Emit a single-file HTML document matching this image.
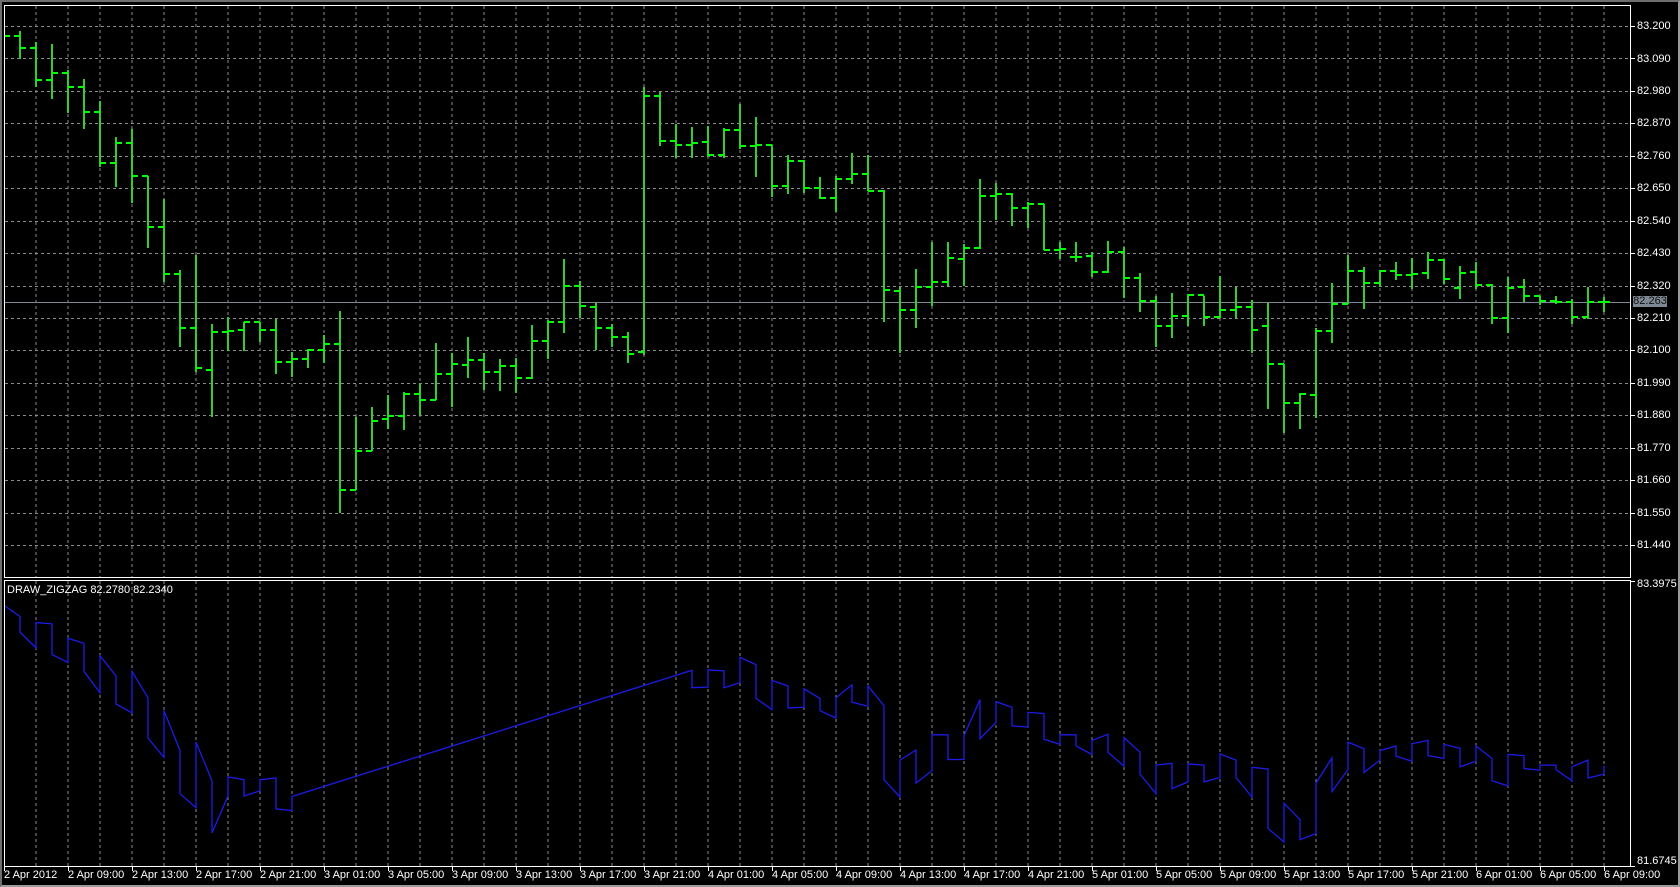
<!DOCTYPE html>
<html><head><meta charset="utf-8">
<style>
html,body{margin:0;padding:0;background:#000;}
body{width:1680px;height:887px;position:relative;overflow:hidden;font-family:"Liberation Sans",Tahoma,sans-serif;}
.outer{position:absolute;left:0;top:0;width:1676px;height:883px;border:2px solid #6e6e6e;border-right-color:#9a9a9a;border-bottom-color:#9a9a9a;}
svg{position:absolute;left:0;top:0;}
.pl{position:absolute;left:1637px;color:#fff;font-size:11px;line-height:12px;}
.tl{position:absolute;top:869px;color:#fff;font-size:11px;line-height:12px;white-space:nowrap;}
</style></head><body>
<div class="outer"></div>
<svg id="s" width="1680" height="887" xmlns="http://www.w3.org/2000/svg"></svg>
<div class="pl" style="top:20px">83.200</div>
<div class="pl" style="top:53px">83.090</div>
<div class="pl" style="top:85px">82.980</div>
<div class="pl" style="top:117px">82.870</div>
<div class="pl" style="top:150px">82.760</div>
<div class="pl" style="top:182px">82.650</div>
<div class="pl" style="top:215px">82.540</div>
<div class="pl" style="top:247px">82.430</div>
<div class="pl" style="top:280px">82.320</div>
<div class="pl" style="top:312px">82.210</div>
<div class="pl" style="top:344px">82.100</div>
<div class="pl" style="top:377px">81.990</div>
<div class="pl" style="top:409px">81.880</div>
<div class="pl" style="top:442px">81.770</div>
<div class="pl" style="top:474px">81.660</div>
<div class="pl" style="top:507px">81.550</div>
<div class="pl" style="top:539px">81.440</div>
<div class="pl" style="top:296px;left:1633px;width:34px;height:11px;background:#7d8893;color:#111;text-align:center;line-height:11px">82.263</div>
<div class="pl" style="top:578px">83.3975</div>
<div class="pl" style="top:855px">81.6745</div>
<div style="position:absolute;left:7px;top:584px;color:#fff;font-size:11px;line-height:12px">DRAW_ZIGZAG 82.2780 82.2340</div>
<div class="tl" style="left:4px">2 Apr 2012</div>
<div class="tl" style="left:68px">2 Apr 09:00</div>
<div class="tl" style="left:132px">2 Apr 13:00</div>
<div class="tl" style="left:196px">2 Apr 17:00</div>
<div class="tl" style="left:260px">2 Apr 21:00</div>
<div class="tl" style="left:324px">3 Apr 01:00</div>
<div class="tl" style="left:388px">3 Apr 05:00</div>
<div class="tl" style="left:452px">3 Apr 09:00</div>
<div class="tl" style="left:516px">3 Apr 13:00</div>
<div class="tl" style="left:580px">3 Apr 17:00</div>
<div class="tl" style="left:644px">3 Apr 21:00</div>
<div class="tl" style="left:708px">4 Apr 01:00</div>
<div class="tl" style="left:772px">4 Apr 05:00</div>
<div class="tl" style="left:836px">4 Apr 09:00</div>
<div class="tl" style="left:900px">4 Apr 13:00</div>
<div class="tl" style="left:964px">4 Apr 17:00</div>
<div class="tl" style="left:1028px">4 Apr 21:00</div>
<div class="tl" style="left:1092px">5 Apr 01:00</div>
<div class="tl" style="left:1156px">5 Apr 05:00</div>
<div class="tl" style="left:1220px">5 Apr 09:00</div>
<div class="tl" style="left:1284px">5 Apr 13:00</div>
<div class="tl" style="left:1348px">5 Apr 17:00</div>
<div class="tl" style="left:1412px">5 Apr 21:00</div>
<div class="tl" style="left:1476px">6 Apr 01:00</div>
<div class="tl" style="left:1540px">6 Apr 05:00</div>
<div class="tl" style="left:1604px">6 Apr 09:00</div>
<script>
// [open, high, low, close] in pixel y of main chart
var B=[[36,11,40,36],[36,31,59,48],[48,42,87,80],[80,44,99,73],[73,70,113,87],[87,79,129,112],[112,101,167,163],[163,137,187,143],[143,129,203,176],[176,176,248,227],
[227,199,282,274],[274,270,347,328],[328,255,372,368],[370,324,417,332],[332,317,351,331],[330,322,351,322],[322,322,342,330],[330,319,374,362],[362,352,377,359],[359,349,368,350],
[350,335,363,344],[344,311,513,490],[490,417,490,451],[451,407,451,421],[419,395,429,416],[416,392,430,394],[394,383,415,400],[400,343,400,374],[374,353,407,364],[365,337,378,360],
[360,353,390,372],[372,359,391,366],[366,358,393,378],[378,325,379,341],[341,320,359,322],[322,259,333,286],[286,281,318,306],[307,303,350,328],[328,324,347,337],[337,332,363,354],
[352,87,355,96],[96,92,146,141],[141,124,158,145],[145,127,158,143],[142,126,157,155],[155,128,158,130],[130,104,149,146],[146,117,177,145],[145,145,197,186],[186,155,194,161],
[161,160,193,188],[188,177,199,198],[198,176,212,179],[179,153,184,174],[174,155,191,191],[191,190,322,290],[291,287,353,310],[310,269,328,287],[287,242,306,282],[282,242,286,258],
[259,244,286,248],[248,179,249,196],[196,183,220,194],[194,193,226,208],[208,202,228,204],[204,204,250,250],[250,242,259,249],[257,242,262,257],[256,252,277,272],[272,241,273,252],
[252,247,298,278],[278,273,312,301],[301,296,347,326],[326,293,338,316],[316,294,326,295],[295,296,326,317],[317,276,318,310],[310,287,318,307],[307,300,353,330],[326,303,409,364],
[364,364,433,403],[403,393,429,394],[395,328,418,331],[331,283,343,304],[304,255,304,271],[271,267,309,283],[283,270,287,271],[271,262,280,275],[275,258,289,274],[273,252,279,260],
[260,259,284,279],[288,266,299,273],[272,262,289,285],[285,284,324,318],[318,277,333,288],[287,279,302,296],[296,296,305,301],[301,296,304,302],[302,299,324,317],[317,287,319,302],[302,297,312,302]];
var ns="http://www.w3.org/2000/svg",s=document.getElementById('s'),h='';
// grid
var g='';
for(var x=36;x<1630;x+=32){g+='M'+x+' 6V577M'+x+' 581V866';}
for(var i=0;i<17;i++){var y=Math.round(26+32.44*i)+.5;g+='M5 '+y+'H1630';}
h+='<path d="'+g+'" stroke="#8c8c8c" stroke-width="1" stroke-dasharray="3,3" fill="none"/>';
// price line
h+='<path d="M5 302.5H1630" stroke="#7b8794" stroke-width="1"/>';
// bars
var v='',t='';
for(var k=0;k<B.length;k++){var b=B[k],x=4+16*k;
 v+='M'+x+' '+b[1]+'V'+b[2];
 t+='M'+(x-6)+' '+b[0]+'H'+x+'M'+x+' '+b[3]+'H'+(x+6);}
h+='<g clip-path="url(#c1)"><path d="'+v+'" stroke="#32cd32" stroke-width="2" fill="none"/><path d="'+t+'" stroke="#00ff00" stroke-width="2" fill="none"/></g>';
// zigzag
function iy(py){var p=83.2-(py-26)/294.9;return (581+(83.3975-p)/1.723*285).toFixed(1);}
var pts=[];
for(var k=0;k<B.length;k++){if(k>=19&&k<=42)continue;var b=B[k],x=4+16*k;
 if(k%2==1){pts.push(x+','+iy(b[1]));pts.push(x+','+iy(b[2]));}else{pts.push(x+','+iy(b[2]));pts.push(x+','+iy(b[1]));}}
pts.shift();
h+='<g clip-path="url(#c2)"><polyline points="'+pts.join(' ')+'" stroke="#1c1ce6" stroke-width="1.3" fill="none"/></g>';
h+='<defs><clipPath id="c1"><rect x="5" y="6" width="1625" height="571"/></clipPath><clipPath id="c2"><rect x="5" y="581" width="1625" height="285"/></clipPath></defs>';
// frames
h+='<path d="M4.5 5.5H1630.5V577.5H4.5Z M4.5 580.5H1630.5V866.5H4.5Z" stroke="#fff" stroke-width="1" fill="none"/>';
// ticks
var tk='';
for(var i=0;i<17;i++){var y=Math.round(26+32.44*i)+.5;tk+='M1630 '+y+'H1635';}
tk+='M1630 581.5H1635M1630 866.5H1635';
for(var x=4;x<=1604;x+=64){tk+='M'+(x+.5)+' 866V871';}
h+='<path d="'+tk+'" stroke="#fff" stroke-width="1"/>';
s.innerHTML=h;
</script>
</body></html>
